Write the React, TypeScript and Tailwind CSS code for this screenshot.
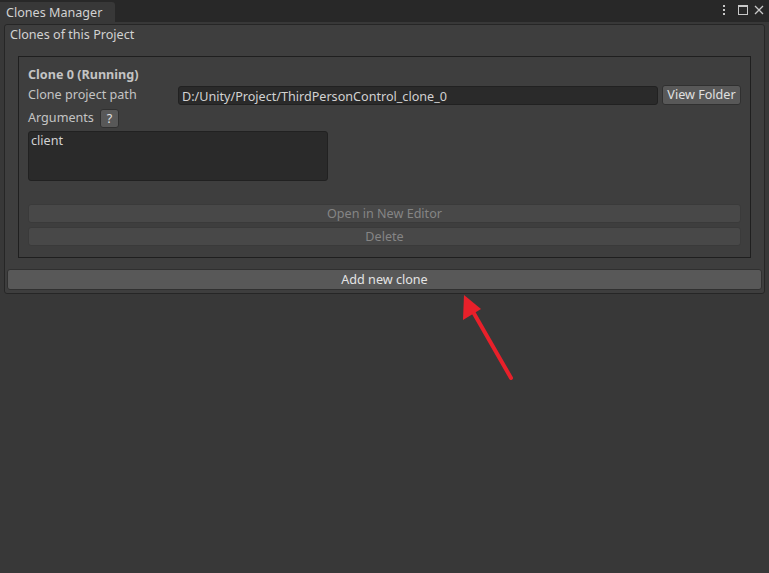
import React from "react";

export default function App() {
  const font = { fontFamily: '"Noto Sans", "Open Sans", sans-serif' };
  return (
    <div className="w-[769px] h-[573px] bg-[#383838] flex flex-col text-[#c4c4c4] text-[12.6px] overflow-hidden relative" style={font}>
      {/* Tab bar */}
      <div className="h-[22px] bg-[#282828] flex items-end shrink-0">
        <div className="w-[115px] h-[20px] bg-[#383838] rounded-tr-[3px] pl-[6px] leading-[21px] text-[#d2d2d2]">
          Clones Manager
        </div>
        <div className="flex-1" />
        <div className="flex items-center h-[22px] pr-[5px] mb-[1px]">
          <svg width="4" height="12" viewBox="0 0 4 12" className="mr-[11px]">
            <rect x="1" y="1" width="2" height="2" fill="#c8c8c8" />
            <rect x="1" y="5" width="2" height="2" fill="#c8c8c8" />
            <rect x="1" y="9" width="2" height="2" fill="#c8c8c8" />
          </svg>
          <svg width="12" height="12" viewBox="0 0 12 12" className="mr-[5px]">
            <rect x="1.5" y="1.5" width="9" height="9" fill="none" stroke="#c8c8c8" strokeWidth="1" />
            <rect x="1" y="1" width="10" height="2" fill="#c8c8c8" />
          </svg>
          <svg width="10" height="10" viewBox="0 0 10 10">
            <path d="M1 1 L9 9 M9 1 L1 9" stroke="#c8c8c8" strokeWidth="1.3" />
          </svg>
        </div>
      </div>

      {/* Content */}
      <div className="px-[4px] pt-[2px]">
        <div className="border border-[#262626] rounded-[3px] bg-[#3e3e3e] px-[2px] pb-[3px]">
          <div className="h-[18px] pl-[3px] leading-[18px] text-[#d2d2d2] mt-[1px]">Clones of this Project</div>
          <div className="mx-[11px] mt-[12px] border border-[#1f1f1f] px-[9px] pt-[9px] pb-[11px]">
            <div className="h-[18px] leading-[18px] font-bold text-[#c4c4c4]">Clone 0 (Running)</div>
            <div className="flex items-center h-[20px] mt-[1px]">
              <div className="w-[150px] shrink-0">Clone project path</div>
              <div className="flex-1 h-[19px] bg-[#2a2a2a] border border-[#212121] rounded-[3px] px-[3px] leading-[19px] text-[#d2d2d2] overflow-hidden whitespace-nowrap">
                D:/Unity/Project/ThirdPersonControl_clone_0
              </div>
              <div className="ml-[4px] w-[79px] h-[20px] bg-[#585858] border border-[#303030] rounded-[3px] text-center leading-[18px] text-[#e0e0e0]">
                View Folder
              </div>
            </div>
            <div className="flex items-center h-[20px] mt-[3px]">
              <div className="w-[72px] shrink-0">Arguments</div>
              <div className="w-[19px] h-[19px] bg-[#585858] border border-[#303030] rounded-[3px] text-center leading-[17px] text-[#e0e0e0]">?</div>
            </div>
            <div className="w-[300px] h-[50px] mt-[3px] bg-[#2a2a2a] border border-[#212121] rounded-[3px] px-[2px] leading-[17px] text-[#d2d2d2]">
              client
            </div>
            <div className="h-[19px] mt-[23px] bg-[#484848] rounded-[3px] border border-[#3a3a3a] text-center leading-[17px] text-[#858585]">
              Open in New Editor
            </div>
            <div className="h-[19px] mt-[4px] bg-[#484848] rounded-[3px] border border-[#3a3a3a] text-center leading-[17px] text-[#858585]">
              Delete
            </div>
          </div>
          <div className="mt-[11px] h-[21px] bg-[#585858] border border-[#303030] rounded-[3px] text-center leading-[19px] text-[#e4e4e4]">
            Add new clone
          </div>
        </div>
      </div>

      {/* Red arrow annotation */}
      <svg className="absolute left-0 top-0 pointer-events-none" width="769" height="573">
        <line x1="511" y1="378" x2="472" y2="310" stroke="#e8202a" strokeWidth="4" strokeLinecap="round" />
        <polygon points="464,295 463,320 481,309" fill="#e8202a" />
      </svg>
    </div>
  );
}
